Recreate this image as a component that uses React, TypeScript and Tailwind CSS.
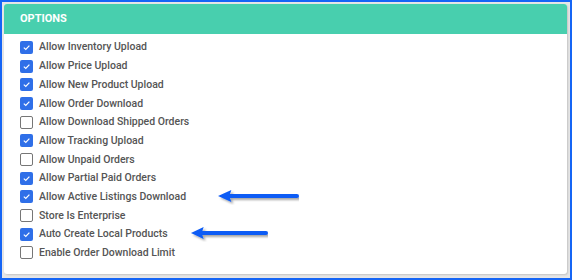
const options = [
	{ label: 'Allow Inventory Upload', checked: true },
	{ label: 'Allow Price Upload', checked: true },
	{ label: 'Allow New Product Upload', checked: true },
	{ label: 'Allow Order Download', checked: true },
	{ label: 'Allow Download Shipped Orders', checked: false },
	{ label: 'Allow Tracking Upload', checked: true },
	{ label: 'Allow Unpaid Orders', checked: false },
	{ label: 'Allow Partial Paid Orders', checked: true },
	{ label: 'Allow Active Listings Download', checked: true, arrow: 'ml-[31px] w-[82px]' },
	{ label: 'Store Is Enterprise', checked: false },
	{ label: 'Auto Create Local Products', checked: true, arrow: 'ml-[22px] w-[78px]' },
	{ label: 'Enable Order Download Limit', checked: false }
]

const Arrow = ({ className }: { className: string }) => (
	<svg className={className} height="16" viewBox="0 0 80 16" preserveAspectRatio="none">
		<defs>
			<filter id="sh" x="-10%" y="-50%" width="130%" height="250%">
				<feDropShadow dx="2" dy="2" stdDeviation="1.2" floodColor="#000" floodOpacity="0.35" />
			</filter>
		</defs>
		<g filter="url(#sh)">
			<line x1="12" y1="7" x2="78" y2="7" stroke="#0d5cf5" strokeWidth="4" strokeLinecap="round" />
			<path d="M1 7 L14 1 L12 7 L14 13 Z" fill="#0d5cf5" />
		</g>
	</svg>
)

const Checkbox = ({ checked }: { checked: boolean }) =>
	checked ? (
		<span className="flex h-[13px] w-[13px] items-center justify-center rounded-[2px] bg-[#2f6fe8]">
			<svg width="9" height="9" viewBox="0 0 10 10">
				<path d="M2 5.2 L4.2 7.2 L8.2 2.8" fill="none" stroke="#fff" strokeWidth="1.3" />
			</svg>
		</span>
	) : (
		<span className="h-[13px] w-[13px] rounded-[2px] border border-[#767676] bg-white" />
	)

export default function App() {
	return (
		<div className="h-[280px] w-[572px] border-2 border-[#1565f5] bg-[#e6e6e6] pt-[2px] pl-[2px] pr-[3px] pb-[4px] font-['Roboto',sans-serif]">
			<div className="h-full w-full rounded-[3px] bg-white shadow-[1px_1px_2px_rgba(0,0,0,0.15)]">
				<div className="flex h-[30px] items-center rounded-t-[3px] bg-[#48cfae] px-[16px]">
					<span className="text-[11px] font-bold text-white">OPTIONS</span>
				</div>
				<div className="flex flex-col pt-[4px] pl-[16px]">
					{options.map(o => (
						<div key={o.label} className="flex h-[18.7px] items-center">
							<Checkbox checked={o.checked} />
							<span className="ml-[6px] text-[10.5px] font-medium text-[#555]">{o.label}</span>
							{o.arrow && <Arrow className={o.arrow} />}
						</div>
					))}
				</div>
			</div>
		</div>
	)
}
